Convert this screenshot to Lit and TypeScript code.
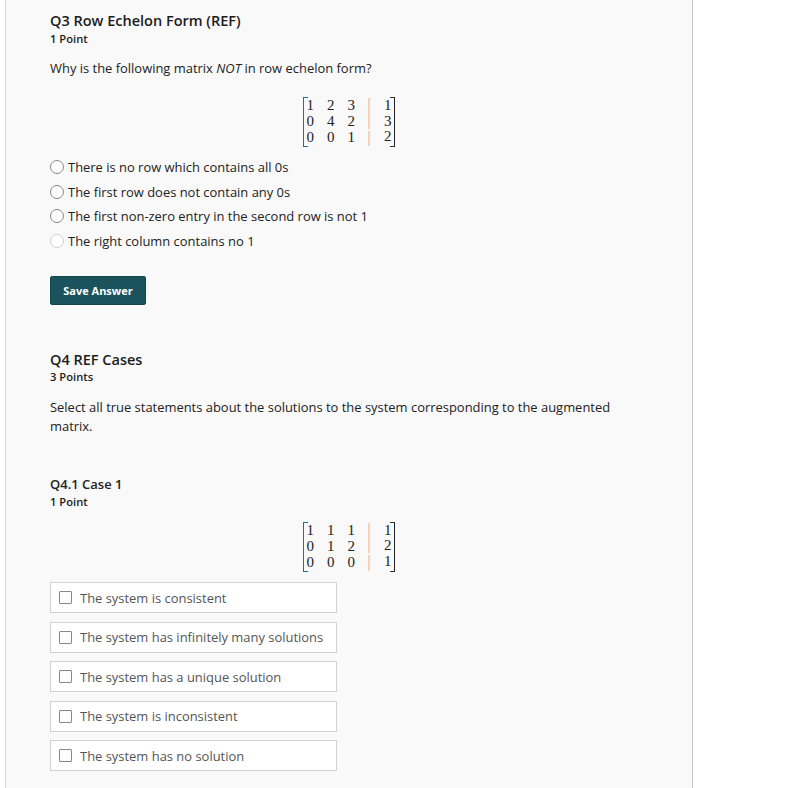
import { LitElement, css, html } from 'lit'
import { customElement, property } from 'lit/decorators.js'

@customElement('aug-matrix')
export class AugMatrix extends LitElement {
  static styles = css`
    :host {
      display: flex;
      justify-content: center;
      font-family: 'Liberation Serif', serif;
      font-size: 15px;
      line-height: 15.7px;
      color: #222;
    }
    .matrix {
      display: flex;
      height: 50px;
      box-sizing: border-box;
      border-left: 1.5px solid #1b6f93;
      border-right: 1.5px solid #222;
      position: relative;
      padding: 1px 2.5px;
    }
    .matrix::before,
    .matrix::after {
      content: '';
      position: absolute;
      top: 0;
      bottom: 0;
      width: 4px;
      border-top: 1px solid #1b6f93;
      border-bottom: 1px solid #1b6f93;
    }
    .matrix::before {
      left: 0;
    }
    .matrix::after {
      right: 0;
      border-color: #333;
    }
    .cells {
      display: grid;
      grid-template-columns: repeat(3, 8px);
      column-gap: 12.5px;
      text-align: center;
    }
    .rule {
      display: flex;
      flex-direction: column;
      gap: 2px;
      width: 2px;
      margin: 0 13.5px 0 13px;
    }
    .rule span {
      background: #f8d2b6;
    }
    .rule span:first-child {
      flex: 2;
    }
    .rule span:last-child {
      flex: 1;
    }
    .last {
      width: 8px;
      text-align: center;
    }
  `

  @property({ type: Array })
  rows: string[][] = []

  render() {
    return html`
      <div class="matrix">
        <div class="cells">
          ${this.rows.flatMap((r) => r.slice(0, 3).map((c) => html`<span>${c}</span>`))}
        </div>
        <div class="rule"><span></span><span></span></div>
        <div class="last">${this.rows.map((r) => html`<div>${r[3]}</div>`)}</div>
      </div>
    `
  }
}

@customElement('app-root')
export class AppRoot extends LitElement {
  static styles = css`
    :host {
      display: block;
      background: #fff;
      height: 788px;
      overflow: hidden;
      font-family: 'Open Sans', 'Noto Sans', sans-serif;
      color: #222;
      font-size: 12.95px;
    }
    .panel {
      box-sizing: border-box;
      width: 688px;
      height: 788px;
      margin-left: 5px;
      padding: 12px 0 0 44px;
      background: #f9f9f9;
      border-left: 1px solid #d4d4d4;
      border-right: 1px solid #c8c8c8;
    }
    .body {
      width: 598px;
    }
    h2 {
      margin: 0;
      font-size: 14.5px;
      line-height: 18px;
      font-weight: 600;
      color: #1c1c1c;
    }
    .sub {
      margin-top: 1px;
      font-size: 11.2px;
      line-height: 16px;
      font-weight: 600;
      color: #222;
    }
    .q4 + .sub {
      margin-top: 0;
    }
    p {
      margin: 0;
      line-height: 19px;
    }
    .why {
      margin-top: 12px;
    }
    .mat-a {
      margin-top: 19px;
    }
    .radios {
      margin-top: 10.6px;
      display: flex;
      flex-direction: column;
      gap: 5.6px;
    }
    .radio {
      display: flex;
      align-items: center;
      gap: 4px;
      height: 19px;
    }
    .dot {
      box-sizing: border-box;
      width: 14px;
      height: 14px;
      border: 1.5px solid #888;
      border-radius: 50%;
      background: #fff;
    }
    .dot.faint {
      border-color: #cfcfcf;
    }
    button {
      display: block;
      margin-top: 25.4px;
      width: 96px;
      height: 29px;
      padding: 0;
      border: 1px solid #124650;
      border-radius: 2px;
      background: #1a535c;
      color: #fff;
      font: 700 11px 'Open Sans', 'Noto Sans', sans-serif;
    }
    .q4 {
      margin-top: 46px;
    }
    .select {
      margin-top: 13px;
    }
    .q41 {
      margin-top: 40px;
    }
    h3 {
      margin: 0;
      font-size: 13px;
      line-height: 17px;
      font-weight: 600;
    }
    .mat-b {
      margin-top: 12px;
    }
    .checks {
      margin-top: 10.7px;
      display: flex;
      flex-direction: column;
      gap: 8.5px;
    }
    .check {
      box-sizing: border-box;
      width: 287px;
      height: 31px;
      display: flex;
      align-items: center;
      gap: 8px;
      padding-left: 8px;
      background: #fff;
      border: 1px solid #d2d2d2;
      color: #555;
    }
    .box {
      box-sizing: border-box;
      width: 13px;
      height: 13px;
      border: 1.5px solid #888;
      border-radius: 1px;
      background: #fff;
    }
  `

  render() {
    const radios = [
      'There is no row which contains all 0s',
      'The first row does not contain any 0s',
      'The first non-zero entry in the second row is not 1',
      'The right column contains no 1',
    ]
    const checks = [
      'The system is consistent',
      'The system has infinitely many solutions',
      'The system has a unique solution',
      'The system is inconsistent',
      'The system has no solution',
    ]
    const a = [
      ['1', '2', '3', '1'],
      ['0', '4', '2', '3'],
      ['0', '0', '1', '2'],
    ]
    const b = [
      ['1', '1', '1', '1'],
      ['0', '1', '2', '2'],
      ['0', '0', '0', '1'],
    ]
    return html`
      <div class="panel">
        <div class="body">
          <h2>Q3 Row Echelon Form (REF)</h2>
          <div class="sub">1 Point</div>
          <p class="why">Why is the following matrix <em>NOT</em> in row echelon form?</p>
          <aug-matrix class="mat-a" .rows=${a}></aug-matrix>
          <div class="radios">
            ${radios.map(
              (t, i) => html`<div class="radio"><span class="dot ${i === 3 ? 'faint' : ''}"></span>${t}</div>`,
            )}
          </div>
          <button>Save Answer</button>
          <h2 class="q4">Q4 REF Cases</h2>
          <div class="sub">3 Points</div>
          <p class="select">
            Select all true statements about the solutions to the system corresponding to the augmented matrix.
          </p>
          <h3 class="q41">Q4.1 Case 1</h3>
          <div class="sub">1 Point</div>
          <aug-matrix class="mat-b" .rows=${b}></aug-matrix>
          <div class="checks">
            ${checks.map((t) => html`<div class="check"><span class="box"></span>${t}</div>`)}
          </div>
        </div>
      </div>
    `
  }
}
